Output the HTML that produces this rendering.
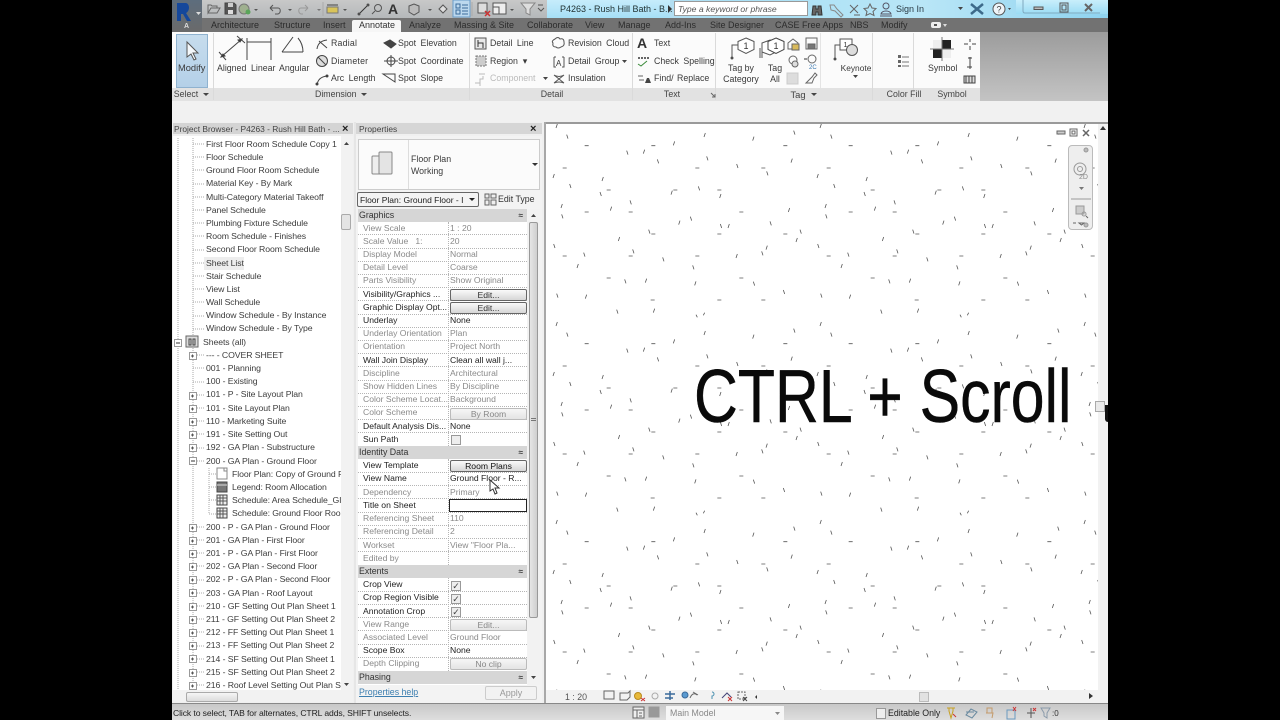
<!DOCTYPE html>
<html><head><meta charset="utf-8"><title>Revit</title>
<style>
html,body{margin:0;padding:0;width:1280px;height:720px;overflow:hidden;background:#000}
body{font-family:"Liberation Sans",sans-serif;font-size:8.8px;color:#3a3a3a;position:relative}
#w{position:absolute;left:0;top:0;width:1280px;height:720px;filter:blur(.3px)}
.a{position:absolute}
.t{position:absolute;white-space:nowrap;line-height:12px;height:12px}
.g{color:#8a8a8a}
.k{color:#222}
.tab{position:absolute;top:19px;white-space:nowrap;color:#2c2c2c;font-size:9px;line-height:13px}
.tree .t{font-size:8.7px;letter-spacing:-.08px;color:#3c3c3c}
.pl{position:absolute;left:363px;white-space:nowrap;font-size:8.6px;line-height:12px}
.pv{position:absolute;left:450px;white-space:nowrap;font-size:8.6px;line-height:12px}
.row{position:absolute;left:358px;width:169px;height:0;border-top:1px dotted #b5b5b5}
.hd{position:absolute;left:358px;width:169px;height:13px;background:#d6d6d6;font-size:8.8px;line-height:13px;color:#333;text-indent:1px}
.hd i{position:absolute;right:4px;top:0;font-style:normal;font-size:8px;text-indent:0;font-weight:bold}
.btn{position:absolute;left:450px;width:75px;height:10px;border:1px solid #666;border-radius:2px;background:linear-gradient(#fafafa,#d6d6d6);text-align:center;font-size:8.6px;line-height:10px}
.btn.off{border-color:#bbb;color:#888;background:linear-gradient(#f6f6f6,#e4e4e4)}
.cb{position:absolute;left:451px;width:8px;height:8px;border:1px solid #999;background:#eee;font-size:9px;line-height:8px;color:#444;text-align:center}
.lab{position:absolute;top:89px;height:11px;line-height:11px;font-size:8.8px;color:#444;text-align:center}
.sep{position:absolute;top:33px;width:1px;height:67px;background:#dadada}
svg{position:absolute;overflow:visible}
</style></head><body><div id="w">

<!-- window base -->
<div class="a" style="left:172px;top:0;width:936px;height:720px;background:#f0f0f0"></div>

<!-- title bar -->
<div class="a" style="left:172px;top:0;width:936px;height:18px;background:linear-gradient(90deg,#b9d3e3 0,#c6dbe8 40%,#a9e0f5 60%,#b9e6f7 80%,#8fd3ef 100%)"></div>
<div class="a" style="left:172px;top:0;width:375px;height:18px;background:linear-gradient(#c8c8c8,#b4b8ba)"></div>
<div class="a" style="left:547px;top:0;width:123px;height:18px;background:linear-gradient(#c6ecfb,#a6dff6)"></div>
<!-- R logo -->
<div class="a" style="left:172px;top:0;width:30px;height:32px;background:linear-gradient(#5d6d7d,#6a6a6a)"></div>
<svg style="left:172px;top:0" width="30" height="32"><path d="M5 3h9c4 1 4 8 0 10l5 8h-4l-4-7-2 0v7H5z" fill="#14479b"/><path d="M24 12l5 0-2.500 3z" fill="#ddd"/></svg>
<div class="t" style="left:184px;top:21px;font-size:7px;color:#ddd;font-weight:bold">A</div>

<!-- QAT -->
<svg style="left:205px;top:0" width="345" height="18" fill="none" stroke="#555" stroke-width="1">
<path d="M3 5h3l1 1h5v2H6l-3 5zM3 13h9l3-5H6" stroke="#666"/>
<path d="M20 3h9l2 2v9H20z" fill="#555" stroke="#444"/><rect x="23" y="3" width="5" height="4" fill="#ccc" stroke="none"/><rect x="23" y="10" width="5" height="4" fill="#ddd" stroke="none"/>
<circle cx="39" cy="9" r="5" fill="#9fb08f" stroke="#777"/><circle cx="43" cy="12" r="2.500" fill="#5aa55a" stroke="none"/>
<path d="M49 9l2 2 2-2" fill="#555" stroke="none"/>
<path d="M65 8h8c3 0 3 5 0 6h-3M65 8l3-3M65 8l3 3"/>
<path d="M83 9l2 2 2-2" fill="#555" stroke="none"/>
<path d="M103 8h-7c-3 0-3 5 0 6h2M103 8l-3-3M103 8l-3 3" stroke="#999"/>
<path d="M112 9l2 2 2-2" fill="#777" stroke="none"/>
<path d="M118 2v14" stroke="#aaa"/>
<rect x="122" y="7" width="11" height="6" fill="#d9c45a" stroke="#777"/><path d="M122 5h11" stroke="#444"/>
<path d="M138 9l2 2 2-2" fill="#555" stroke="none"/>
<path d="M154 14l9-9" stroke="#333"/><circle cx="154" cy="14" r="1" fill="#333"/><circle cx="163" cy="5" r="1" fill="#333"/>
<circle cx="173" cy="8" r="3.500"/><path d="M170 11l-3 3"/>
<path d="M204 6l5-2 5 2v6l-5 3-5-3z" fill="#bbb" stroke="#555"/><path d="M223 9l2 2 2-2" fill="#555" stroke="none"/>
<path d="M234 9l4-4 4 4-4 4z" fill="#ddd" stroke="#555"/>
<rect x="248" y="0" width="17" height="17" fill="#bcd8ee" stroke="#6a9cc8"/><path d="M251 4h4v4h-4zM251 10h4v4h-4zM257 5h6M257 8h6M257 11h6M257 14h6" stroke="#3a6a9a"/>
<path d="M267 2v14" stroke="#aaa"/>
<rect x="273" y="3" width="9" height="10" fill="#ddd"/><path d="M280 11l5 5M285 11l-5 5" stroke="#c33" stroke-width="1.500"/>
<rect x="288" y="3" width="13" height="11" fill="#eee"/><path d="M288 7h6v7" /><path d="M305 9l2 2 2-2" fill="#555" stroke="none"/>
<path d="M316 3h14l-5 6v6l-4-2V9z" fill="#ddd" stroke="#888"/><path d="M333 5h5M333 8l3 3 3-3" stroke="#555"/>
</svg>
<div class="t" style="left:388px;top:2px;font-size:14px;font-weight:bold;color:#333;line-height:15px;height:15px">A</div>
<div class="t" style="left:560px;top:3px;font-size:9px;color:#233">P4263 - Rush Hill Bath - B...</div>
<svg style="left:667px;top:5px" width="6" height="8"><path d="M1 0l4 4-4 4z" fill="#333"/></svg>
<div class="a" style="left:674px;top:1px;width:134px;height:15px;background:#fff;border:1px solid #999;box-sizing:border-box"></div>
<div class="t" style="left:678px;top:3px;font-size:8.600px;font-style:italic;color:#555">Type a keyword or phrase</div>
<svg style="left:810px;top:1px" width="110" height="17" fill="none" stroke="#444">
<path d="M3 5h3v3h2V5h3l1 9H8v-3H6v3H2z" fill="#666" stroke="#333"/>
<path d="M20 4l4 0 3 4 6 6-2 2-6-6-4-1z" stroke="#888"/>
<path d="M40 4l8 8M48 4l-8 8M44 14h6" stroke="#666"/>
<path d="M60 3l2 4 4 .5-3 3 1 4-4-2-4 2 1-4-3-3 4-.5z" stroke="#666"/>
</svg>
<svg style="left:879px;top:1px" width="14" height="16" fill="none" stroke="#556"><circle cx="7" cy="5" r="3"/><path d="M2 13c1-4 9-4 10 0zM1 15h12"/></svg>
<div class="t" style="left:896px;top:3px;font-size:9px;color:#2a3a44">Sign In</div>
<svg style="left:958px;top:7px" width="6" height="4"><path d="M0 0h5l-2.500 3z" fill="#444"/></svg>
<svg style="left:970px;top:2px" width="14" height="14"><path d="M1 2l12 10M13 2L1 12" stroke="#3d6a8a" stroke-width="2.500"/></svg>
<svg style="left:980px;top:1px" width="30" height="16" fill="none"><circle cx="19" cy="8" r="6" stroke="#555" fill="#eef4f8"/><text x="16.500" y="11.500" font-size="9" fill="#444" stroke="none" font-family="Liberation Sans">?</text><path d="M28 7h3l-1.500 2z" fill="#444"/></svg>
<div class="a" style="left:1016px;top:0;width:92px;height:14px;background:linear-gradient(#c9eefb,#9bdcf4)"></div>
<svg style="left:1020px;top:0" width="85" height="16" fill="none" stroke="#555">
<path d="M3 0v11q0 2 2 2H80"  stroke="#7fa9bf"/><rect x="14" y="7" width="9" height="2.500" fill="#bbb"/><rect x="40" y="3" width="8" height="9"/><rect x="42" y="5" width="4" height="5"/>
<path d="M65 4l7 7M72 4l-7 7" stroke="#666" stroke-width="2"/></svg>

<!-- tabs row -->
<div class="a" style="left:202px;top:18px;width:906px;height:14px;background:#727272"></div>
<div class="a" style="left:352px;top:20px;width:49px;height:13px;background:#f6f6f6;border-radius:2px 2px 0 0"></div>
<div class="tab" style="left:211px;color:#2a2a2a">Architecture</div>
<div class="tab" style="left:274px">Structure</div>
<div class="tab" style="left:323px">Insert</div>
<div class="tab" style="left:359px;color:#333">Annotate</div>
<div class="tab" style="left:409px">Analyze</div>
<div class="tab" style="left:454px">Massing &amp; Site</div>
<div class="tab" style="left:527px">Collaborate</div>
<div class="tab" style="left:585px">View</div>
<div class="tab" style="left:618px">Manage</div>
<div class="tab" style="left:665px">Add-Ins</div>
<div class="tab" style="left:710px">Site Designer</div>
<div class="tab" style="left:775px">CASE Free Apps</div>
<div class="tab" style="left:850px">NBS</div>
<div class="tab" style="left:881px">Modify</div>
<svg style="left:930px;top:22px" width="18" height="7"><rect x="1" y="0" width="10" height="6" rx="2" fill="#eee"/><rect x="4" y="2" width="3" height="2" fill="#555"/><path d="M13 2h4l-2 3z" fill="#ddd"/></svg>

<!-- ribbon -->
<div class="a" style="left:172px;top:32px;width:808px;height:56px;background:#fbfbfb"></div>
<div class="a" style="left:172px;top:88px;width:808px;height:13px;background:#e2e2e2"></div>
<div class="a" style="left:980px;top:32px;width:128px;height:69px;background:linear-gradient(#9c9c9c,#c4c4c4)"></div>
<div class="a" style="left:176px;top:34px;width:30px;height:52px;background:linear-gradient(#c6dced,#b4d0e8);border:1px solid #8fb2cf"></div>
<svg style="left:186px;top:42px" width="14" height="20"><path d="M1 0v15l4-3 3 6 2-1-3-6h5z" fill="#f4f8fb" stroke="#555"/></svg>
<div class="t" style="left:178px;top:62px;font-size:9.300px">Modify</div>
<div class="lab" style="left:172px;width:28px">Select</div>
<svg style="left:203px;top:93px" width="7" height="4"><path d="M0 0h6l-3 3z" fill="#444"/></svg>
<div class="sep" style="left:213px"></div><div class="sep" style="left:469px"></div><div class="sep" style="left:632px"></div><div class="sep" style="left:715px"></div><div class="sep" style="left:872px"></div><div class="sep" style="left:913px"></div>
<div class="a" style="left:820px;top:33px;width:1px;height:55px;background:#e4e4e4"></div>

<!-- dimension -->
<svg style="left:218px;top:35px" width="92" height="26" fill="none" stroke="#444">
<path d="M3 22L24 4M1 17l7 8M19 1l8 7" /><path d="M3 22l4-1-2-2zM24 4l-4 1 2 2z" fill="#333"/>
<path d="M29 3v22M53 3v22M29 7h24"/>
<path d="M64 17l11-15M64 17h21M80 3q5 6 5 14" stroke="#444"/>
</svg>
<div class="t" style="left:217px;top:62px;font-size:8.800px">Aligned</div>
<div class="t" style="left:251px;top:62px;font-size:8.800px">Linear</div>
<div class="t" style="left:279px;top:62px;font-size:8.800px">Angular</div>
<svg style="left:315px;top:37px" width="15" height="50" fill="none" stroke="#444">
<path d="M2 12q1-8 10-9M4 4l8 7"/><circle cx="7" cy="24" r="5.500" fill="#ddd"/><path d="M3 20l8 8"/>
<path d="M2 48q1-8 10-9" stroke="#444"/><circle cx="2" cy="47" r="1" fill="#333"/><circle cx="12" cy="39" r="1" fill="#333"/>
</svg>
<div class="t" style="left:331px;top:37px;letter-spacing:.2px">Radial</div>
<div class="t" style="left:331px;top:55px;letter-spacing:.2px">Diameter</div>
<div class="t" style="left:331px;top:72px;word-spacing:2px">Arc Length</div>
<svg style="left:382px;top:37px" width="16" height="50" fill="none" stroke="#444">
<path d="M2 6l6-3 6 4-5 4z" fill="#444"/><circle cx="9" cy="24" r="4"/><path d="M2 24h14M9 18v12"/><path d="M1 37h12v8z"/>
</svg>
<div class="t" style="left:398px;top:37px;word-spacing:2px">Spot Elevation</div>
<div class="t" style="left:398px;top:55px;word-spacing:2px">Spot Coordinate</div>
<div class="t" style="left:398px;top:72px;word-spacing:2px">Spot Slope</div>
<div class="lab" style="left:315px;width:40px">Dimension</div>
<svg style="left:361px;top:93px" width="7" height="4"><path d="M0 0h6l-3 3z" fill="#444"/></svg>

<!-- detail -->
<svg style="left:474px;top:37px" width="14" height="50" fill="none" stroke="#555">
<rect x="1" y="1" width="11" height="11" fill="#e8e8e8"/><path d="M4 3v7M4 6h5v5" stroke="#333"/>
<rect x="2" y="19" width="10" height="10" fill="#ccc" stroke="#777" stroke-dasharray="2 1"/>
<path d="M1 46h5v-4h3v-3M5 37h6M6 49v-3" stroke="#bbb"/></svg>
<div class="t" style="left:490px;top:37px;word-spacing:2px">Detail Line</div>
<div class="t" style="left:490px;top:55px">Region &nbsp;▾</div>
<div class="t" style="left:490px;top:72px;color:#bbb">Component</div>
<svg style="left:543px;top:77px" width="6" height="4"><path d="M0 0h5l-2.500 3z" fill="#444"/></svg>
<svg style="left:552px;top:36px" width="14" height="50" fill="none" stroke="#555">
<path d="M3 3q3-3 5 0q4-1 4 3q1 4-3 5q-3 2-5 0q-4 0-3-4q-2-2 2-4z"/>
<path d="M2 21v10h2M12 21v10h-2M2 21h2M12 21h-2" /><text x="4" y="30" font-size="8" fill="#333" stroke="none" font-family="Liberation Sans">A</text>
<path d="M2 39q5 3 10 0M2 39q5 4 10 8M12 39q-5 4-10 8M2 47q5-2 10 0"/>
</svg>
<div class="t" style="left:568px;top:37px;word-spacing:2px">Revision Cloud</div>
<div class="t" style="left:568px;top:55px;word-spacing:2px">Detail Group</div>
<svg style="left:622px;top:60px" width="6" height="4"><path d="M0 0h5l-2.500 3z" fill="#444"/></svg>
<div class="t" style="left:568px;top:72px">Insulation</div>
<div class="lab" style="left:540px;width:24px">Detail</div>

<!-- text -->
<div class="t" style="left:637px;top:37px;font-size:14px;font-weight:bold;color:#333">A</div>
<div class="t" style="left:654px;top:37px">Text</div>
<svg style="left:637px;top:55px" width="15" height="32" fill="none"><path d="M1 9l3 2 6-5" stroke="#3a8a3a"/><path d="M1 3h11" stroke="#666" stroke-dasharray="2 1" stroke-width="2"/><path d="M1 21h5M2 25h5" stroke="#666"/><path d="M8 28l2-5 2 0 2 5z" fill="#444"/></svg>
<div class="t" style="left:654px;top:55px;word-spacing:2px">Check Spelling</div>
<div class="t" style="left:654px;top:72px;word-spacing:1px">Find/ Replace</div>
<div class="lab" style="left:662px;width:20px">Text</div>
<svg style="left:710px;top:92px" width="6" height="6"><path d="M1 1l4 4M5 2v3H2" stroke="#666" fill="none"/></svg>

<!-- tag -->
<svg style="left:728px;top:36px" width="115" height="28" fill="none" stroke="#555">
<path d="M18 2l8 3.500v8l-8 4-8-4v-8z" fill="#fff"/><text x="15.500" y="13" font-size="9" fill="#333" stroke="none" font-family="Liberation Sans">1</text><path d="M10 9H4v13"/>
<circle cx="4" cy="22" r="1" fill="#333"/>
<path d="M42 4l8 3v8l-8 4-8-3V7z" fill="#fff"/><path d="M48 2l8 3.500v8l-8 4-8-4v-8z" fill="#fff" stroke="#444"/><text x="45.500" y="13" font-size="9" fill="#333" stroke="none" font-family="Liberation Sans">1</text><path d="M34 9v13M32 12v10"/>
</svg>
<div class="t" style="left:725px;top:62px;width:32px;text-align:center">Tag by</div>
<div class="t" style="left:723px;top:73px;width:36px;text-align:center">Category</div>
<div class="t" style="left:766px;top:62px;width:18px;text-align:center">Tag</div>
<div class="t" style="left:766px;top:73px;width:18px;text-align:center">All</div>
<svg style="left:786px;top:37px" width="32" height="50" fill="none" stroke="#666">
<path d="M2 6l5-4 5 4v6H2z"/><rect x="6" y="7" width="7" height="6" fill="#d8b95a"/>
<rect x="20" y="1" width="11" height="11"/><rect x="22" y="7" width="7" height="5" fill="#777"/>
<circle cx="7" cy="23" r="4"/><circle cx="9" cy="27" r="3" fill="#ddd"/>
<circle cx="26" cy="22" r="4"/><path d="M18 22h3" stroke="#333"/><text x="23" y="32" font-size="6" fill="#3a78b0" stroke="none" font-family="Liberation Sans">2C</text>
<rect x="1" y="36" width="11" height="11" fill="#ddd" stroke="#ccc"/>
<path d="M20 46l6-6 3-4 2 2-3 3-2 5z"/>
</svg>
<svg style="left:830px;top:37px" width="34" height="26" fill="none" stroke="#555">
<rect x="10" y="2" width="12" height="11" fill="#fff"/><text x="13.500" y="10" font-size="7" fill="#333" stroke="none" font-family="Liberation Sans">1</text><circle cx="22" cy="13" r="5.500" fill="#ddd"/><path d="M10 8H5v14"/><circle cx="5" cy="22" r="1" fill="#333"/>
</svg>
<div class="t" style="left:832px;top:62px;width:48px;text-align:center;font-size:8.400px">Keynote</div>
<svg style="left:853px;top:75px" width="6" height="4"><path d="M0 0h5l-2.500 3z" fill="#444"/></svg>
<div class="lab" style="left:788px;width:20px;font-size:9.400px">Tag</div>
<svg style="left:811px;top:93px" width="7" height="4"><path d="M0 0h6l-3 3z" fill="#444"/></svg>

<!-- color fill -->
<svg style="left:896px;top:54px" width="14" height="14"><path d="M2 1h3v3H2zM2 6h3v3H2zM2 11h3v2H2z" fill="#666"/><path d="M6 3h7M6 8h7M6 12h7" stroke="#777"/></svg>
<div class="lab" style="left:884px;width:40px">Color Fill</div>

<!-- symbol -->
<svg style="left:928px;top:36px" width="30" height="26"><rect x="5" y="4" width="9" height="9" fill="#eee"/><rect x="14" y="4" width="9" height="9" fill="#222"/><rect x="5" y="13" width="9" height="9" fill="#222"/><rect x="14" y="13" width="9" height="9" fill="#eee"/><path d="M2 13h24M14 1v24" stroke="#777"/></svg>
<div class="t" style="left:928px;top:62px">Symbol</div>
<svg style="left:962px;top:37px" width="16" height="48" fill="none" stroke="#444">
<path d="M2 7h4M10 7h4M8 2v3M8 9v4" /><path d="M8 20v12M6 21h4M5 30h5"/><rect x="2" y="39" width="11" height="7" fill="#ddd"/><path d="M4 39v7M7 39v7M10 39v7"/>
</svg>
<div class="lab" style="left:936px;width:32px">Symbol</div>

<!-- options bar -->
<div class="a" style="left:172px;top:101px;width:936px;height:21px;background:#f1f1f1"></div>

<!-- project browser -->
<div class="a" style="left:173px;top:123px;width:180px;height:11px;background:#d4d4d4"></div>
<div class="t" style="left:174px;top:123px;font-size:8.400px;color:#444">Project Browser - P4263 - Rush Hill Bath - ...</div>
<div class="t" style="left:342px;top:123px;font-size:11px;color:#222;font-weight:bold">×</div>
<div class="a" style="left:173px;top:136px;width:168px;height:554px;background:#fff"></div>
<div class="a" style="left:341px;top:136px;width:12px;height:554px;background:#f2f2f2"></div>
<div class="a" style="left:341px;top:214px;width:10px;height:16px;background:#e4e4e4;border:1px solid #aaa;box-sizing:border-box;border-radius:2px"></div>
<svg style="left:344px;top:142px" width="6" height="4"><path d="M0 3h5L2.500 0z" fill="#444"/></svg>
<svg style="left:344px;top:683px" width="6" height="4"><path d="M0 0h5L2.500 3z" fill="#444"/></svg>
<div class="a" style="left:173px;top:690px;width:180px;height:12px;background:#f2f2f2"></div>
<div class="a" style="left:186px;top:692px;width:52px;height:10px;background:linear-gradient(#f6f6f6,#dcdcdc);border:1px solid #aaa;box-sizing:border-box;border-radius:2px"></div>
<div class="a" style="left:204px;top:257px;width:40px;height:13px;background:#ededed"></div>

<svg style="left:173px;top:136px" width="168" height="554" fill="none" stroke="#aaa" stroke-dasharray="1 1">
<path d="M20 2V200M20 8h11M20 21h11M20 34h11M20 48h11M20 61h11M20 74h11M20 87h11M20 100h11M20 114h11M20 127h11M20 140h11M20 153h11M20 166h11M20 180h11M20 193h11"/>
<path d="M20 219h11M20 232h11M20 246h11M20 259h11M20 272h11M20 285h11M20 298h11M20 312h11M20 325h11M20 391h11M20 404h11M20 417h11M20 430h11M20 444h11M20 457h11M20 470h11M20 483h11M20 496h11M20 510h11M20 523h11M20 536h11M20 549h11"/>
<path d="M20 212V554M5 2V554" /><path d="M36 332v46M36 338h8M36 351h8M36 364h8M36 378h8"/>
</svg>
<svg style="left:173px;top:136px" width="168" height="554" fill="#fff" stroke="#999">
<rect x="1.500" y="203.500" width="7" height="7"/><path d="M3 207h4" stroke="#333"/>
<rect x="13" y="200" width="12" height="11" fill="#ddd" stroke="#666"/><path d="M16 203h2v6h-2zM20 203h2v6h-2z" stroke="#444" fill="none"/>
<path d="M16.500 216.500h7v7h-7zM16.500 256.500h7v7h-7zM16.500 269.500h7v7h-7zM16.500 282.500h7v7h-7zM16.500 295.500h7v7h-7zM16.500 308.500h7v7h-7zM16.500 388.500h7v7h-7zM16.500 401.500h7v7h-7zM16.500 414.500h7v7h-7zM16.500 427.500h7v7h-7zM16.500 440.500h7v7h-7zM16.500 453.500h7v7h-7zM16.500 467.500h7v7h-7zM16.500 480.500h7v7h-7zM16.500 493.500h7v7h-7zM16.500 506.500h7v7h-7zM16.500 519.500h7v7h-7zM16.500 533.500h7v7h-7zM16.500 546.500h7v7h-7z"/>
<path d="M18 220h3M19.500 218.500v3M18 260h3M19.500 258.500v3M18 273h3M19.500 271.500v3M18 286h3M19.500 284.500v3M18 299h3M19.500 297.500v3M18 312h3M19.500 310.500v3M18 392h3M19.500 390.500v3M18 405h3M19.500 403.500v3M18 418h3M19.500 416.500v3M18 431h3M19.500 429.500v3M18 444h3M19.500 442.500v3M18 457h3M19.500 455.500v3M18 471h3M19.500 469.500v3M18 484h3M19.500 482.500v3M18 497h3M19.500 495.500v3M18 510h3M19.500 508.500v3M18 523h3M19.500 521.500v3M18 537h3M19.500 535.500v3M18 550h3M19.500 548.500v3" stroke="#555"/>
<rect x="16.500" y="321.500" width="7" height="7" /><path d="M18 325h4" stroke="#333"/>
<rect x="44" y="332" width="10" height="11" stroke="#888"/><path d="M47 332h4v3h3" stroke="#888" fill="none"/><rect x="44" y="346" width="10" height="10" fill="#777" stroke="#444"/><path d="M44 349h10" stroke="#ddd"/><rect x="44" y="359" width="10" height="10" fill="#eee" stroke="#444"/><path d="M44 362h10M44 365h10M47 359v10M50 359v10" stroke="#555"/><rect x="44" y="372" width="10" height="10" fill="#eee" stroke="#444"/><path d="M44 375h10M44 378h10M47 372v10M50 372v10" stroke="#555"/>
</svg>

<div class="tree" style="position:absolute;left:0;top:0;width:341px;height:690px;overflow:hidden">
<div class="t" style="left:206px;top:138px">First Floor Room Schedule Copy 1</div>
<div class="t" style="left:206px;top:151px">Floor Schedule</div>
<div class="t" style="left:206px;top:164px">Ground Floor Room Schedule</div>
<div class="t" style="left:206px;top:177px">Material Key - By Mark</div>
<div class="t" style="left:206px;top:191px">Multi-Category Material Takeoff</div>
<div class="t" style="left:206px;top:204px">Panel Schedule</div>
<div class="t" style="left:206px;top:217px">Plumbing Fixture Schedule</div>
<div class="t" style="left:206px;top:230px">Room Schedule - Finishes</div>
<div class="t" style="left:206px;top:243px">Second Floor Room Schedule</div>
<div class="t" style="left:206px;top:257px">Sheet List</div>
<div class="t" style="left:206px;top:270px">Stair Schedule</div>
<div class="t" style="left:206px;top:283px">View List</div>
<div class="t" style="left:206px;top:296px">Wall Schedule</div>
<div class="t" style="left:206px;top:309px">Window Schedule - By Instance</div>
<div class="t" style="left:206px;top:322px">Window Schedule - By Type</div>
<div class="t" style="left:203px;top:336px">Sheets (all)</div>
<div class="t" style="left:206px;top:349px">--- - COVER SHEET</div>
<div class="t" style="left:206px;top:362px">001 - Planning</div>
<div class="t" style="left:206px;top:375px">100 - Existing</div>
<div class="t" style="left:206px;top:388px">101 - P - Site Layout Plan</div>
<div class="t" style="left:206px;top:402px">101 - Site Layout Plan</div>
<div class="t" style="left:206px;top:415px">110 - Marketing Suite</div>
<div class="t" style="left:206px;top:428px">191 - Site Setting Out</div>
<div class="t" style="left:206px;top:441px">192 - GA Plan - Substructure</div>
<div class="t" style="left:206px;top:455px">200 - GA Plan - Ground Floor</div>
<div class="t" style="left:232px;top:468px">Floor Plan: Copy of Ground Floor</div>
<div class="t" style="left:232px;top:481px">Legend: Room Allocation</div>
<div class="t" style="left:232px;top:494px">Schedule: Area Schedule_GIA</div>
<div class="t" style="left:232px;top:507px">Schedule: Ground Floor Room</div>
<div class="t" style="left:206px;top:521px">200 - P - GA Plan - Ground Floor</div>
<div class="t" style="left:206px;top:534px">201 - GA Plan - First Floor</div>
<div class="t" style="left:206px;top:547px">201 - P - GA Plan - First Floor</div>
<div class="t" style="left:206px;top:560px">202 - GA Plan - Second Floor</div>
<div class="t" style="left:206px;top:573px">202 - P - GA Plan - Second Floor</div>
<div class="t" style="left:206px;top:587px">203 - GA Plan - Roof Layout</div>
<div class="t" style="left:206px;top:600px">210 - GF Setting Out Plan Sheet 1</div>
<div class="t" style="left:206px;top:613px">211 - GF Setting Out Plan Sheet 2</div>
<div class="t" style="left:206px;top:626px">212 - FF Setting Out Plan Sheet 1</div>
<div class="t" style="left:206px;top:639px">213 - FF Setting Out Plan Sheet 2</div>
<div class="t" style="left:206px;top:653px">214 - SF Setting Out Plan Sheet 1</div>
<div class="t" style="left:206px;top:666px">215 - SF Setting Out Plan Sheet 2</div>
<div class="t" style="left:206px;top:679px">216 - Roof Level Setting Out Plan Sheet</div>
</div>

<!-- properties -->
<div class="a" style="left:354px;top:122px;width:2px;height:582px;background:#e6e6e6"></div>
<div class="a" style="left:356px;top:123px;width:186px;height:11px;background:#d6d6d6"></div>
<div class="t" style="left:359px;top:123px;font-size:8.400px;color:#444">Properties</div>
<div class="t" style="left:530px;top:123px;font-size:11px;color:#222;font-weight:bold">×</div>
<div class="a" style="left:356px;top:136px;width:186px;height:568px;background:#f3f3f3"></div>
<div class="a" style="left:358px;top:139px;width:182px;height:51px;background:#fbfbfb;border:1px solid #ccc;box-sizing:border-box"></div>
<div class="a" style="left:408px;top:140px;width:1px;height:49px;background:#ddd"></div>
<svg style="left:370px;top:150px" width="28" height="28" fill="#eee" stroke="#888"><rect x="2" y="6" width="13" height="18" rx="1"/><rect x="9" y="2" width="13" height="22" rx="1" fill="#e4e4e4"/></svg>
<div class="t" style="left:411px;top:153px;font-size:8.800px">Floor Plan</div>
<div class="t" style="left:411px;top:165px;font-size:8.800px">Working</div>
<svg style="left:532px;top:163px" width="6" height="4"><path d="M0 0h6l-3 3z" fill="#333"/></svg>
<div class="a" style="left:357px;top:192px;width:122px;height:15px;background:#f4f4f4;border:1px solid #666;box-sizing:border-box;border-radius:2px"></div>
<div class="t" style="left:360px;top:194px;font-size:8.500px;color:#222">Floor Plan: Ground Floor - I</div>
<svg style="left:469px;top:198px" width="7" height="4"><path d="M0 0h6l-3 3z" fill="#222"/></svg>
<svg style="left:484px;top:193px" width="13" height="13" fill="#eee" stroke="#666"><rect x="1" y="1" width="4" height="4"/><rect x="7" y="1" width="5" height="4"/><rect x="1" y="7" width="4" height="5"/><rect x="7" y="7" width="5" height="5"/></svg>
<div class="t" style="left:498px;top:193px;font-size:8.800px;color:#333">Edit Type</div>

<div class="a" style="left:358px;top:209px;width:169px;height:476px;background:#fff"></div>
<div class="a" style="left:528px;top:209px;width:12px;height:476px;background:#f2f2f2"></div>
<div class="a" style="left:529px;top:222px;width:9px;height:396px;background:linear-gradient(90deg,#e6e6e6,#cfcfcf);border:1px solid #999;box-sizing:border-box;border-radius:2px"></div>
<svg style="left:531px;top:214px" width="6" height="4"><path d="M0 3h5L2.500 0z" fill="#444"/></svg>
<svg style="left:531px;top:676px" width="6" height="4"><path d="M0 0h5L2.500 3z" fill="#444"/></svg>
<svg style="left:531px;top:418px" width="6" height="4" stroke="#777"><path d="M0 .5h5M0 2.500h5"/></svg>

<div class="hd" style="top:209px">Graphics<i>≈</i></div>
<div class="hd" style="top:446px">Identity Data<i>≈</i></div>
<div class="hd" style="top:565px">Extents<i>≈</i></div>
<div class="hd" style="top:671px">Phasing<i>≈</i></div>

<div class="row" style="top:234px"></div><div class="row" style="top:248px"></div><div class="row" style="top:261px"></div><div class="row" style="top:274px"></div><div class="row" style="top:287px"></div><div class="row" style="top:300px"></div><div class="row" style="top:314px"></div><div class="row" style="top:327px"></div><div class="row" style="top:340px"></div><div class="row" style="top:353px"></div><div class="row" style="top:366px"></div><div class="row" style="top:380px"></div><div class="row" style="top:393px"></div><div class="row" style="top:406px"></div><div class="row" style="top:419px"></div><div class="row" style="top:432px"></div>
<div class="row" style="top:472px"></div><div class="row" style="top:485px"></div><div class="row" style="top:498px"></div><div class="row" style="top:512px"></div><div class="row" style="top:525px"></div><div class="row" style="top:538px"></div><div class="row" style="top:551px"></div>
<div class="row" style="top:591px"></div><div class="row" style="top:604px"></div><div class="row" style="top:617px"></div><div class="row" style="top:630px"></div><div class="row" style="top:644px"></div><div class="row" style="top:657px"></div>
<div class="a" style="left:448px;top:222px;width:0;height:224px;border-left:1px dotted #b5b5b5"></div>
<div class="a" style="left:448px;top:459px;width:0;height:106px;border-left:1px dotted #b5b5b5"></div>
<div class="a" style="left:448px;top:578px;width:0;height:93px;border-left:1px dotted #b5b5b5"></div>

<div class="pl g" style="top:222px">View Scale</div><div class="pv g" style="top:222px">1 : 20</div>
<div class="pl g" style="top:235px">Scale Value &nbsp;&nbsp;1:</div><div class="pv g" style="top:235px">20</div>
<div class="pl g" style="top:248px">Display Model</div><div class="pv g" style="top:248px">Normal</div>
<div class="pl g" style="top:261px">Detail Level</div><div class="pv g" style="top:261px">Coarse</div>
<div class="pl g" style="top:274px">Parts Visibility</div><div class="pv g" style="top:274px">Show Original</div>
<div class="pl k" style="top:288px">Visibility/Graphics ...</div><div class="btn" style="top:289px;color:#333">Edit...</div>
<div class="pl k" style="top:301px">Graphic Display Opt...</div><div class="btn" style="top:302px;color:#333">Edit...</div>
<div class="pl k" style="top:314px">Underlay</div><div class="pv k" style="top:314px">None</div>
<div class="pl g" style="top:327px">Underlay Orientation</div><div class="pv g" style="top:327px">Plan</div>
<div class="pl g" style="top:340px">Orientation</div><div class="pv g" style="top:340px">Project North</div>
<div class="pl k" style="top:354px">Wall Join Display</div><div class="pv k" style="top:354px">Clean all wall j...</div>
<div class="pl g" style="top:367px">Discipline</div><div class="pv g" style="top:367px">Architectural</div>
<div class="pl g" style="top:380px">Show Hidden Lines</div><div class="pv g" style="top:380px">By Discipline</div>
<div class="pl g" style="top:393px">Color Scheme Locat...</div><div class="pv g" style="top:393px">Background</div>
<div class="pl g" style="top:406px">Color Scheme</div><div class="btn off" style="top:408px">By Room</div>
<div class="pl k" style="top:420px">Default Analysis Dis...</div><div class="pv k" style="top:420px">None</div>
<div class="pl k" style="top:433px">Sun Path</div><div class="cb" style="top:435px"></div>

<div class="pl k" style="top:459px">View Template</div><div class="btn" style="top:460px;color:#111">Room Plans</div>
<div class="pl k" style="top:472px">View Name</div><div class="pv k" style="top:472px">Ground Floor - R...</div>
<div class="pl g" style="top:486px">Dependency</div><div class="pv g" style="top:486px">Primary</div>
<div class="pl k" style="top:499px">Title on Sheet</div><div class="a" style="left:449px;top:499px;width:76px;height:11px;border:1px solid #222;background:#fff"></div>
<div class="pl g" style="top:512px">Referencing Sheet</div><div class="pv g" style="top:512px">110</div>
<div class="pl g" style="top:525px">Referencing Detail</div><div class="pv g" style="top:525px">2</div>
<div class="pl g" style="top:539px">Workset</div><div class="pv g" style="top:539px">View "Floor Pla...</div>
<div class="pl g" style="top:552px">Edited by</div>

<div class="pl k" style="top:578px">Crop View</div><div class="cb" style="top:581px">✓</div>
<div class="pl k" style="top:591px">Crop Region Visible</div><div class="cb" style="top:594px">✓</div>
<div class="pl k" style="top:605px">Annotation Crop</div><div class="cb" style="top:607px">✓</div>
<div class="pl g" style="top:618px">View Range</div><div class="btn off" style="top:619px">Edit...</div>
<div class="pl g" style="top:631px">Associated Level</div><div class="pv g" style="top:631px">Ground Floor</div>
<div class="pl k" style="top:644px">Scope Box</div><div class="pv k" style="top:644px">None</div>
<div class="pl g" style="top:657px">Depth Clipping</div><div class="btn off" style="top:658px">No clip</div>

<div class="t" style="left:359px;top:686px;font-size:8.800px;color:#3d7fb0;text-decoration:underline">Properties help</div>
<div class="a" style="left:485px;top:686px;width:52px;height:14px;background:#f2f2f2;border:1px solid #ccc;box-sizing:border-box;border-radius:2px;text-align:center;color:#999;font-size:9px;line-height:12px">Apply</div>
<svg style="left:489px;top:480px" width="11" height="15"><path d="M1 0v11l3-2 2 5 2-1-2-5h4z" fill="#fff" stroke="#333"/></svg>

<!-- view -->
<div class="a" style="left:544px;top:122px;width:564px;height:581px;background:#fff"></div>
<div class="a" style="left:544px;top:122px;width:564px;height:2px;background:#9a9a9a"></div>
<div class="a" style="left:544px;top:122px;width:2px;height:581px;background:#a8a8a8"></div>
<svg style="left:546px;top:124px" width="552" height="566">
<defs><pattern id="tk" patternUnits="userSpaceOnUse" x="-1" y="-4" width="264" height="198" viewBox="0 0 792 594">
<path fill="none" stroke="#555" stroke-width="2.400" d="M119 77h12M319 77h12M715 77h12M53 144h12M451 144h12M649 144h12M185 210h12M385 210h12M517 210h12M119 276h12M251 276h12M583 276h12M319 342h12M517 342h12M715 342h12M53 408h12M251 408h12M451 408h12M185 474h12M583 474h12M317 540h12M517 540h12M649 540h12M33 24l4-12M477 51l4-12M623 62l4-12M385 76l4-12M295 101l4-12M738 128l4-12M171 183l4-12M24 174l4-12M524 234l4-12M378 224l4-12M48 264l4-12M196 272l4-12M730 276l4-12M401 314l4-12M549 324l4-12M220 363l4-12M753 366l4-12M663 389l4-12M573 414l4-12M96 444l4-12M301 488l4-12M449 496l4-12M121 536l4-12M325 578l4-12M475 586l4-8M65 44l4 12M746 32l4 12M245 92l4 12M337 118l4 12M485 109l4 12M575 132l4 12M665 154l4 12M74 192l4 12M165 216l4 12M460 199l4 12M255 241l4 12M50 283l4 12M436 290l4 12M526 312l4 12M675 304l4 12M311 329l4 12M765 329l4 12M26 372l4 12M116 398l4 12M263 388l4 12M650 394l4 12M353 412l4 12M443 436l4 12M239 478l4 12M625 485l4 12M715 510l4 12M35 521l4 12M215 569l4 12M453 584l4 8"/>
</pattern></defs>
<rect width="552" height="566" fill="url(#tk)"/>
</svg>
<div class="t" style="left:694px;top:351px;height:90px;line-height:90px;font-size:75px;color:#0a0a0a;transform:scaleX(.81);transform-origin:0 0;-webkit-text-stroke:.5px #0a0a0a">CTRL + Scroll</div>
<div class="a" style="left:1098px;top:124px;width:10px;height:566px;background:#f2f2f2"></div>
<div class="a" style="left:1095px;top:401px;width:10px;height:11px;background:#eaeaea;border:1px solid #aaa;box-sizing:border-box"></div>
<div class="a" style="left:1105px;top:405px;width:3px;height:17px;background:#111;border-radius:0 0 0 3px"></div>
<svg style="left:1100px;top:126px" width="7" height="5"><path d="M0 4h6L3 0z" fill="#333"/></svg>
<!-- view controls -->
<svg style="left:1056px;top:128px" width="36" height="10" fill="none" stroke="#666"><rect x="1" y="3" width="8" height="3" fill="#ccc"/><rect x="14" y="1" width="7" height="7"/><rect x="16" y="3" width="3" height="3"/><path d="M27 2l6 6M33 2l-6 6" stroke-width="1.500"/></svg>
<div class="a" style="left:1068px;top:145px;width:25px;height:85px;background:#eee;border:1px solid #bbb;box-sizing:border-box;border-radius:4px"></div>
<svg style="left:1069px;top:146px" width="24" height="84" fill="none" stroke="#999">
<circle cx="17" cy="4" r="2" fill="#bbb"/><circle cx="11" cy="23" r="6"/><circle cx="11" cy="23" r="2.500"/><text x="10" y="33" font-size="7" fill="#888" stroke="none" font-family="Liberation Sans">2D</text><path d="M10 41h5l-2.500 3z" fill="#777" stroke="none"/><path d="M2 53h20"/><rect x="7" y="60" width="8" height="8" fill="#ccc"/><circle cx="15" cy="68" r="2"/><path d="M17 70l2 2M4 77h3M10 77h5l-2.500 2z" stroke="#666"/><circle cx="17" cy="79" r="2" fill="#bbb"/>
</svg>

<!-- view bottom bar -->
<div class="a" style="left:546px;top:690px;width:562px;height:13px;background:#f2f2f2"></div>
<div class="t" style="left:565px;top:691px;font-size:8.800px;color:#555">1 : 20</div>
<svg style="left:600px;top:689px" width="220" height="13" fill="none" stroke="#666">
<rect x="4" y="2" width="10" height="8" fill="#f2f2f2"/><path d="M20 4h8l2-2v6l-3 3h-7z"/><circle cx="38" cy="7" r="3.500" fill="#e8b93a" stroke="#b88a20"/><path d="M41 9l4 3M45 9l-4 3" stroke="#c33"/><circle cx="55" cy="7" r="3" stroke="#aaa"/><path d="M65 5h10M70 2v9M65 9h8" stroke="#3a6a9a" stroke-width="1.500"/><circle cx="85" cy="6" r="3" fill="#5a9ad0" stroke="#3a6a9a"/><path d="M90 9c2-5 5-5 7-3M93 3l5 3" stroke="#666"/><path d="M112 3a2 2 0 1 1 0 4l0 3" stroke="#4a90b0"/><path d="M122 9l5-5 4 4" stroke="#447"/><path d="M128 8l4 4M132 8l-4 4" stroke="#c33"/><rect x="138" y="3" width="7" height="7" stroke-dasharray="2 1"/><path d="M143 8l4 4M147 8l-4 4" stroke="#444"/><path d="M157 6l-2 2 2 2" fill="#333" stroke="none"/>
</svg>
<div class="a" style="left:919px;top:692px;width:10px;height:10px;background:#e2e2e2;border:1px solid #bbb;box-sizing:border-box"></div>
<svg style="left:1089px;top:693px" width="5" height="7"><path d="M0 0l4 3-4 3z" fill="#333"/></svg>

<!-- status bar -->
<div class="a" style="left:172px;top:703px;width:936px;height:17px;background:linear-gradient(#c8c8c8,#dedede);border-top:1px solid #888;box-sizing:border-box"></div>
<div class="t" style="left:173px;top:707px;font-size:8.600px;letter-spacing:-.1px;color:#222">Click to select, TAB for alternates, CTRL adds, SHIFT unselects.</div>
<svg style="left:630px;top:706px" width="32" height="13" fill="none" stroke="#666"><rect x="3" y="1" width="11" height="11" fill="#eee"/><path d="M3 4h11M7 4v8M9 7h3M9 10h3"/><rect x="19" y="1" width="10" height="10" fill="#999" stroke="#999"/></svg>
<div class="a" style="left:666px;top:706px;width:118px;height:14px;background:#f6f6f6"></div>
<div class="t" style="left:670px;top:707px;font-size:8.800px;color:#888">Main Model</div>
<svg style="left:775px;top:712px" width="6" height="4"><path d="M0 0h5l-2.500 3z" fill="#888"/></svg>
<div class="a" style="left:876px;top:708px;width:8px;height:9px;background:#eee;border:1px solid #999"></div>
<div class="t" style="left:888px;top:707px;font-size:8.800px;color:#222">Editable Only</div>
<svg style="left:945px;top:706px" width="105" height="14" fill="none" stroke="#666">
<path d="M2 2h8M4 2v3l2 7 2-7V2" stroke="#c8a020"/><path d="M8 8l3 3" stroke="#c33"/><path d="M21 9l5-6 6 3-5 6zM21 6l8 0" stroke="#6a8aa0"/><path d="M42 2h5v5h-5zM41 7h7l-1 5" stroke="#c49a6a"/><path d="M62 4h8v9h-8z" stroke="#6a9ac0"/><path d="M68 1l3 4M71 1l-3 4" stroke="#c33"/><path d="M86 2v10M82 7h8" stroke="#555"/><path d="M88 2l3 3M91 2l-3 3" stroke="#c33"/><path d="M96 2h9l-3 5v5l-3-2V7z" stroke="#8a9aaa"/>
</svg>
<div class="t" style="left:1052px;top:708px;font-size:8px;color:#333">:0</div>

</div></body></html>
